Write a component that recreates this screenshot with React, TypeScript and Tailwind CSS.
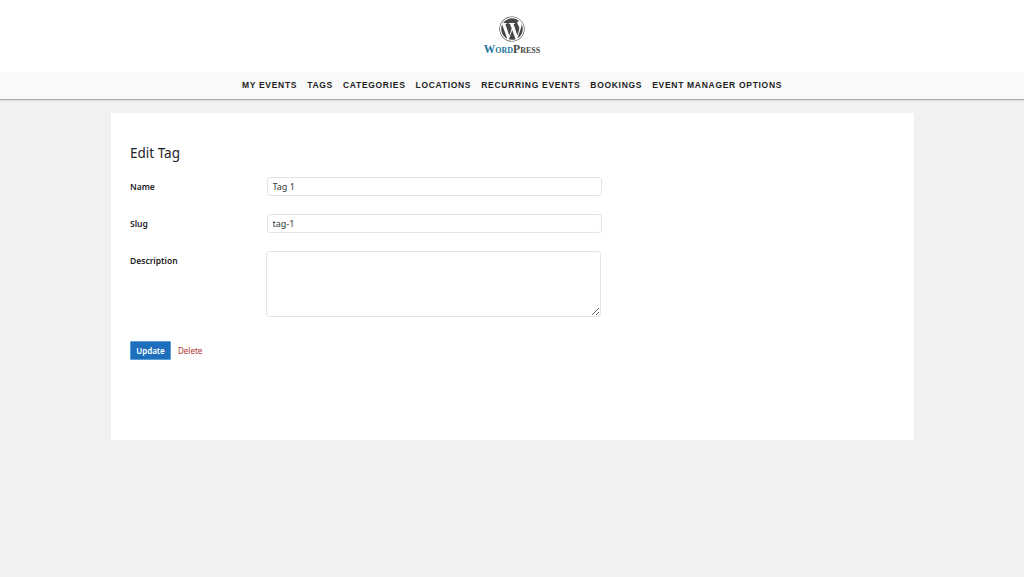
import React from 'react';
import { FaWordpress } from 'react-icons/fa';

const navItems = ['My Events', 'Tags', 'Categories', 'Locations', 'Recurring Events', 'Bookings', 'Event Manager Options'];

const inputClasses =
  'block h-[19px] w-[335px] rounded-[3px] border border-[#e4e4e4] bg-white px-[5px] text-[9px] text-[#32373c] outline-none';

const labelClasses = 'w-[135.5px] shrink-0 pt-[2px] text-[8.5px] font-semibold text-[#1d2327]';

export default function App() {
  return (
    <div className="min-h-[577px] bg-[#f1f1f1] font-['Noto_Sans',sans-serif]">
      {/* Logo */}
      <header className="flex h-[72px] flex-col items-center bg-white pt-[16px]">
        <FaWordpress className="h-[26px] w-[26px] text-[#464646]" />
        <div className="mt-[1px] font-['Liberation_Serif',serif] text-[11.5px] leading-[12px] font-bold [font-variant:small-caps]">
          <span className="text-[#21759b]">Word</span>
          <span className="text-[#464646]">Press</span>
        </div>
      </header>

      {/* Menu */}
      <nav className="flex h-[28px] items-center justify-center gap-[10px] border-b border-[#a8a8a8] bg-[#f9f9f9] font-['Liberation_Sans',sans-serif] text-[8.5px] font-bold tracking-[0.7px] text-[#1d1d1d] uppercase shadow-[0_1px_1px_rgba(0,0,0,0.08)]">
        {navItems.map((item) => (
          <span key={item}>{item}</span>
        ))}
      </nav>

      {/* Edit form */}
      <main className="mx-auto mt-[13px] h-[327px] w-[803px] bg-white px-[19.5px] pt-[31px]">
        <h1 className="text-[13.5px] leading-[19px] text-[#1d2327]">Edit Tag</h1>

        <div className="mt-[14px] flex items-center">
          <label className={labelClasses}>Name</label>
          <input className={`${inputClasses} ml-[1px]`} defaultValue="Tag 1" />
        </div>

        <div className="mt-[18px] flex items-center">
          <label className={labelClasses}>Slug</label>
          <input className={`${inputClasses} ml-[1px]`} defaultValue="tag-1" />
        </div>

        <div className="mt-[18px] flex items-start">
          <label className={`${labelClasses} pt-[4px]`}>Description</label>
          <textarea className="block h-[66px] w-[335.5px] rounded-[3px] border border-[#e4e4e4] bg-white outline-none" />
        </div>

        <div className="mt-[24px] flex items-center gap-[7px]">
          <button className="h-[19px] w-[41px] rounded-[1px] border border-[#5b9dd9] bg-[#1e6fbb] text-[8px] font-semibold text-white">
            Update
          </button>
          <a className="text-[8px] text-[#b32d2e]">Delete</a>
        </div>
      </main>
    </div>
  );
}
